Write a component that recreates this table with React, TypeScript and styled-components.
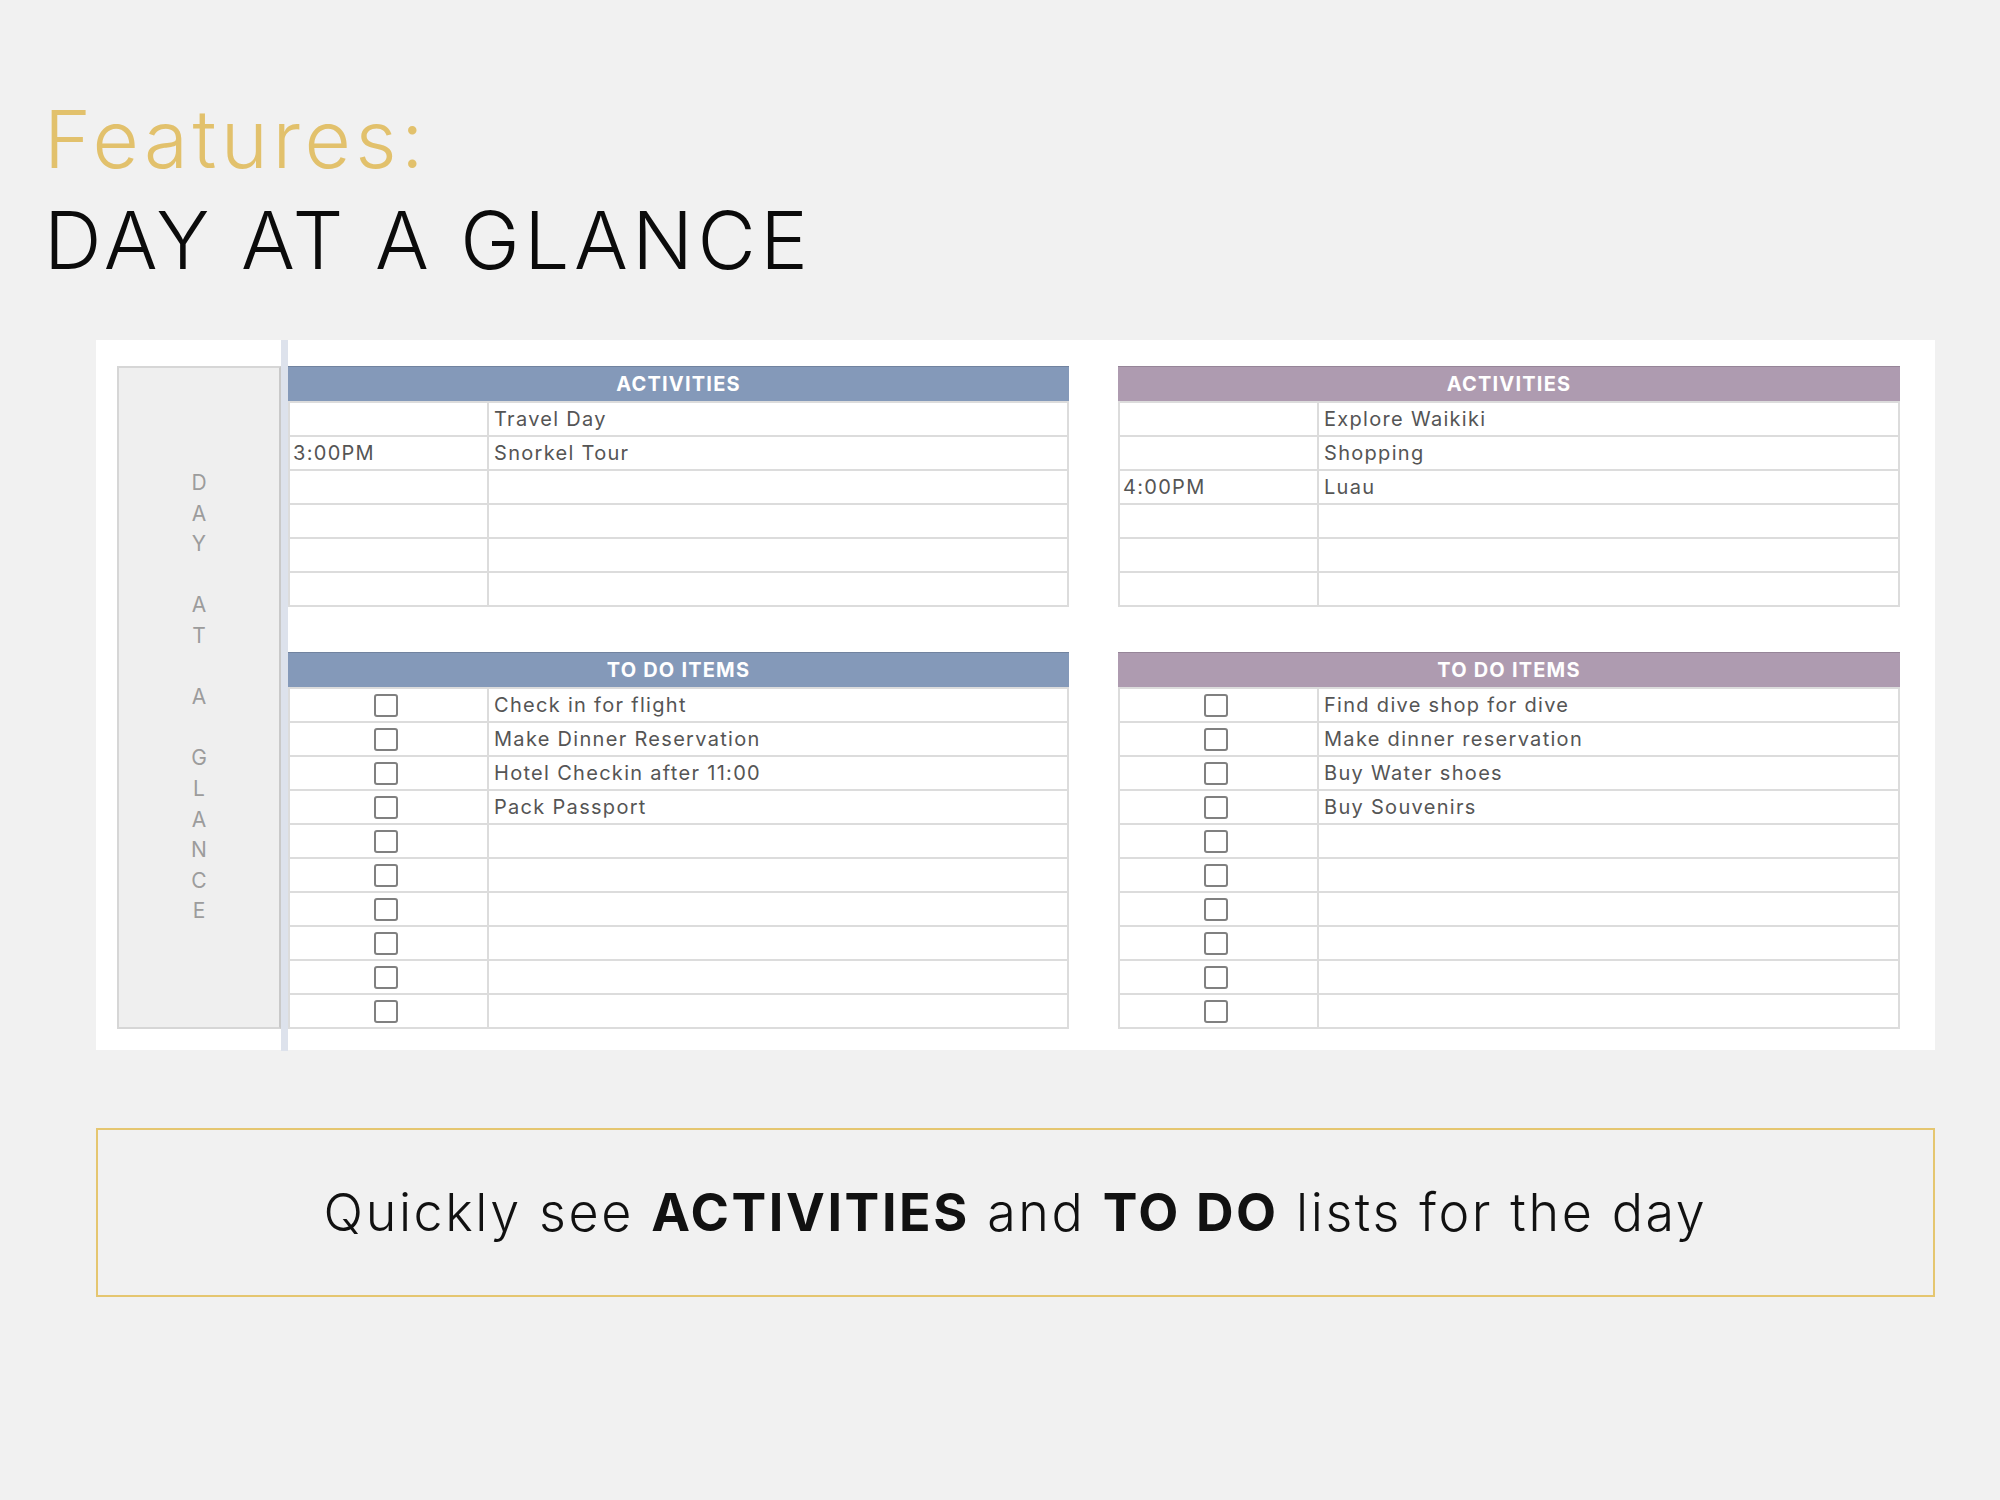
import styled, { createGlobalStyle } from 'styled-components';

const GlobalStyle = createGlobalStyle`
  html, body {
    margin: 0;
    padding: 0;
    background: #f1f1f1;
  }
  body {
    font-family: Inter, "Open Sans", sans-serif;
    width: 2000px;
    height: 1500px;
    overflow: hidden;
  }
`;

const Page = styled.main`
  display: flex;
  flex-direction: column;
  padding: 88px 65px 0 44px;
`;

const Title = styled.h1`
  margin: 0;
  font-size: 80px;
  font-weight: 300;
  line-height: 101px;
  letter-spacing: 4.5px;
`;

const TitleLine = styled.span<{ $gold?: boolean }>`
  display: block;
  color: ${(p) => (p.$gold ? '#e2c16c' : '#0b0b0b')};
`;

const Panel = styled.section`
  margin: 50px 0 0 52px;
  width: 1839px;
  height: 710px;
  background: #ffffff;
  display: grid;
  grid-template-columns: 185px 7px 1fr;
`;

const SideCell = styled.div`
  padding: 26px 0 22px 21px;
  display: flex;
`;

const SideColumn = styled.div`
  flex: 1;
  background: #efefef;
  border: 2px solid #d6d6d6;
  border-right-color: #c9c9c9;
  display: flex;
  flex-direction: column;
  align-items: center;
  justify-content: center;
`;

const Letter = styled.span`
  display: block;
  height: 30.6px;
  line-height: 30.6px;
  font-size: 21px;
  color: #9c9c9c;
  font-weight: 400;
`;

const Divider = styled.div`
  background: #dde2ec;
`;

const Sheets = styled.div`
  padding: 26px 35px 22px 0;
  display: grid;
  grid-template-columns: 781px 782px;
  grid-template-rows: auto auto;
  column-gap: 49px;
  row-gap: 45px;
  align-content: start;
`;

const Table = styled.div`
  display: flex;
  flex-direction: column;
  border-left: 2px solid #dcdcdc;
  border-right: 2px solid #dcdcdc;
  border-bottom: 2px solid #dcdcdc;
`;

const TableHeader = styled.div<{ $tone: 'blue' | 'purple' }>`
  height: 35px;
  box-sizing: border-box;
  margin: 0 -2px;
  background: ${(p) => (p.$tone === 'blue' ? '#8499b9' : '#ae9bb0')};
  border-top: 1px solid ${(p) => (p.$tone === 'blue' ? '#71839f' : '#968598')};
  color: #ffffff;
  font-weight: 700;
  font-size: 20px;
  letter-spacing: 1.2px;
  display: flex;
  align-items: center;
  justify-content: center;
`;

const Row = styled.div`
  display: grid;
  grid-template-columns: 197px 1fr;
  height: 34px;
  border-top: 2px solid #dcdcdc;
  box-sizing: border-box;
`;

const Cell = styled.div<{ $center?: boolean }>`
  display: flex;
  align-items: center;
  justify-content: ${(p) => (p.$center ? 'center' : 'flex-start')};
  padding: ${(p) => (p.$center ? '0 6px 0 0' : '0 3px')};
  font-size: 20px;
  letter-spacing: 1.3px;
  color: #555555;
  white-space: nowrap;
  & + & {
    border-left: 2px solid #dcdcdc;
    padding: 0 5px;
  }
`;

const Checkbox = styled.span`
  display: block;
  width: 24px;
  height: 23px;
  box-sizing: border-box;
  border: 2.5px solid #808080;
  border-radius: 3px;
`;

const Note = styled.div`
  margin: 78px 0 0 52px;
  width: 1839px;
  height: 169px;
  box-sizing: border-box;
  border: 2px solid #e5c670;
  display: flex;
  align-items: center;
  justify-content: center;
  font-size: 52px;
  font-weight: 300;
  color: #111111;
  letter-spacing: 2.6px;
  b {
    font-weight: 700;
  }
`;

type Activity = { time: string; text: string };

const dayOneActivities: Activity[] = [
  { time: '', text: 'Travel Day' },
  { time: '3:00PM', text: 'Snorkel Tour' },
  { time: '', text: '' },
  { time: '', text: '' },
  { time: '', text: '' },
  { time: '', text: '' },
];

const dayTwoActivities: Activity[] = [
  { time: '', text: 'Explore Waikiki' },
  { time: '', text: 'Shopping' },
  { time: '4:00PM', text: 'Luau' },
  { time: '', text: '' },
  { time: '', text: '' },
  { time: '', text: '' },
];

const pad = (items: string[]) => [...items, ...Array(10 - items.length).fill('')];

const dayOneTodos = pad(['Check in for flight', 'Make Dinner Reservation', 'Hotel Checkin after 11:00', 'Pack Passport']);
const dayTwoTodos = pad(['Find dive shop for dive', 'Make dinner reservation', 'Buy Water shoes', 'Buy Souvenirs']);

function ActivityTable({ tone, items }: { tone: 'blue' | 'purple'; items: Activity[] }) {
  return (
    <Table>
      <TableHeader $tone={tone}>ACTIVITIES</TableHeader>
      {items.map((item, i) => (
        <Row key={i}>
          <Cell>{item.time}</Cell>
          <Cell>{item.text}</Cell>
        </Row>
      ))}
    </Table>
  );
}

function TodoTable({ tone, items }: { tone: 'blue' | 'purple'; items: string[] }) {
  return (
    <Table>
      <TableHeader $tone={tone}>TO DO ITEMS</TableHeader>
      {items.map((item, i) => (
        <Row key={i}>
          <Cell $center>
            <Checkbox />
          </Cell>
          <Cell>{item}</Cell>
        </Row>
      ))}
    </Table>
  );
}

export default function App() {
  return (
    <>
      <GlobalStyle />
      <Page>
        <Title>
          <TitleLine $gold>Features:</TitleLine>
          <TitleLine>DAY AT A GLANCE</TitleLine>
        </Title>

        <Panel>
          <SideCell>
            <SideColumn>
              {'DAY AT A GLANCE'.split('').map((ch, i) => (
                <Letter key={i}>{ch === ' ' ? '\u00a0' : ch}</Letter>
              ))}
            </SideColumn>
          </SideCell>
          <Divider />
          <Sheets>
            <ActivityTable tone="blue" items={dayOneActivities} />
            <ActivityTable tone="purple" items={dayTwoActivities} />
            <TodoTable tone="blue" items={dayOneTodos} />
            <TodoTable tone="purple" items={dayTwoTodos} />
          </Sheets>
        </Panel>

        <Note>
          <span>
            Quickly see <b>ACTIVITIES</b> and <b>TO DO</b> lists for the day
          </span>
        </Note>
      </Page>
    </>
  );
}
